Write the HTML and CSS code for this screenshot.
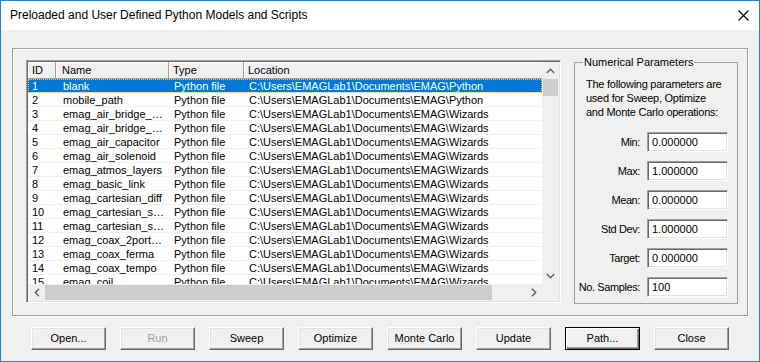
FILE: index.html
```html
<!DOCTYPE html>
<html>
<head>
<meta charset="utf-8">
<link rel="stylesheet" href="styles.css">
</head>
<body>
<div class="window">
  <div class="titlebar">
    <span class="title">Preloaded and User Defined Python Models and Scripts</span>
    <svg class="close-x" width="11" height="11" viewBox="0 0 11 11"><path d="M0.5 0.5 L10.5 10.5 M10.5 0.5 L0.5 10.5" stroke="#000" stroke-width="1.1" fill="none"/></svg>
  </div>
  <div class="client">
    <div class="group">
      <div class="list">
        <div class="list-body">
          <div class="lv-header">
            <div class="hcell">ID</div>
            <div class="hcell">Name</div>
            <div class="hcell">Type</div>
            <div class="hcell last">Location</div>
          </div>
          <div class="rows">
            <div class="row selected"><span>1</span><span>blank</span><span>Python file</span><span>C:\Users\EMAGLab1\Documents\EMAG\Python</span></div>
            <div class="row"><span>2</span><span>mobile_path</span><span>Python file</span><span>C:\Users\EMAGLab1\Documents\EMAG\Python</span></div>
            <div class="row"><span>3</span><span>emag_air_bridge_…</span><span>Python file</span><span>C:\Users\EMAGLab1\Documents\EMAG\Wizards</span></div>
            <div class="row"><span>4</span><span>emag_air_bridge_…</span><span>Python file</span><span>C:\Users\EMAGLab1\Documents\EMAG\Wizards</span></div>
            <div class="row"><span>5</span><span>emag_air_capacitor</span><span>Python file</span><span>C:\Users\EMAGLab1\Documents\EMAG\Wizards</span></div>
            <div class="row"><span>6</span><span>emag_air_solenoid</span><span>Python file</span><span>C:\Users\EMAGLab1\Documents\EMAG\Wizards</span></div>
            <div class="row"><span>7</span><span>emag_atmos_layers</span><span>Python file</span><span>C:\Users\EMAGLab1\Documents\EMAG\Wizards</span></div>
            <div class="row"><span>8</span><span>emag_basic_link</span><span>Python file</span><span>C:\Users\EMAGLab1\Documents\EMAG\Wizards</span></div>
            <div class="row"><span>9</span><span>emag_cartesian_diff</span><span>Python file</span><span>C:\Users\EMAGLab1\Documents\EMAG\Wizards</span></div>
            <div class="row"><span>10</span><span>emag_cartesian_s…</span><span>Python file</span><span>C:\Users\EMAGLab1\Documents\EMAG\Wizards</span></div>
            <div class="row"><span>11</span><span>emag_cartesian_s…</span><span>Python file</span><span>C:\Users\EMAGLab1\Documents\EMAG\Wizards</span></div>
            <div class="row"><span>12</span><span>emag_coax_2port…</span><span>Python file</span><span>C:\Users\EMAGLab1\Documents\EMAG\Wizards</span></div>
            <div class="row"><span>13</span><span>emag_coax_ferma</span><span>Python file</span><span>C:\Users\EMAGLab1\Documents\EMAG\Wizards</span></div>
            <div class="row"><span>14</span><span>emag_coax_tempo</span><span>Python file</span><span>C:\Users\EMAGLab1\Documents\EMAG\Wizards</span></div>
            <div class="row"><span>15</span><span>emag_coil</span><span>Python file</span><span>C:\Users\EMAGLab1\Documents\EMAG\Wizards</span></div>
          </div>
        </div>
        <div class="vscroll">
          <div class="sbtn"><svg width="9" height="6" viewBox="0 0 9 6"><path d="M0.8 5 L4.5 1.3 L8.2 5" stroke="#606060" stroke-width="1.4" fill="none"/></svg></div>
          <div class="vthumb"></div>
          <div class="vtrack"></div>
          <div class="sbtn"><svg width="9" height="6" viewBox="0 0 9 6"><path d="M0.8 1 L4.5 4.7 L8.2 1" stroke="#606060" stroke-width="1.4" fill="none"/></svg></div>
        </div>
        <div class="hscroll">
          <div class="sbtn"><svg width="6" height="9" viewBox="0 0 6 9"><path d="M5 0.8 L1.3 4.5 L5 8.2" stroke="#606060" stroke-width="1.4" fill="none"/></svg></div>
          <div class="hthumb"></div>
          <div class="htrack"></div>
          <div class="sbtn"><svg width="6" height="9" viewBox="0 0 6 9"><path d="M1 0.8 L4.7 4.5 L1 8.2" stroke="#606060" stroke-width="1.4" fill="none"/></svg></div>
        </div>
        <div class="corner"></div>
      </div>
      <fieldset class="params">
        <legend>Numerical Parameters</legend>
        <p class="desc">The following parameters are<br>used for Sweep, Optimize<br>and Monte Carlo operations:</p>
        <div class="fields">
          <label>Min:</label><div class="input">0.000000</div>
          <label>Max:</label><div class="input">1.000000</div>
          <label>Mean:</label><div class="input">0.000000</div>
          <label>Std Dev:</label><div class="input">1.000000</div>
          <label>Target:</label><div class="input">0.000000</div>
          <label>No. Samples:</label><div class="input">100</div>
        </div>
      </fieldset>
    </div>
    <div class="buttons">
      <div class="btn">Open...</div>
      <div class="btn disabled">Run</div>
      <div class="btn">Sweep</div>
      <div class="btn">Optimize</div>
      <div class="btn">Monte Carlo</div>
      <div class="btn">Update</div>
      <div class="btn default">Path...</div>
      <div class="btn">Close</div>
    </div>
  </div>
</div>
</body>
</html>
```
FILE: styles.css
```css
html, body {
  margin: 0;
  padding: 0;
  background: #f0f0f0;
}
.window {
  width: 760px;
  height: 362px;
  box-sizing: border-box;
  border: 1px solid #1883d7;
  display: flex;
  flex-direction: column;
  font-family: "Liberation Sans", Arial, sans-serif;
  font-size: 11px;
  color: #000;
}
.titlebar {
  height: 29px;
  flex: none;
  background: #fff;
  display: flex;
  align-items: center;
  justify-content: space-between;
  padding: 0 10px 1px 9px;
  box-sizing: border-box;
}
.title {
  font-family: "Liberation Sans", Arial, sans-serif;
  font-size: 12px;
  color: #000;
}
.close-x {
  display: block;
  margin-top: 1px;
}
.client {
  flex: 1;
  background: #f0f0f0;
  display: flex;
  flex-direction: column;
}
.group {
  margin: 18px 0 0 11px;
  width: 736px;
  height: 268px;
  box-sizing: border-box;
  border: 1px solid #a0a0a0;
  box-shadow: inset 1px 1px 0 #fff, 1px 1px 0 #fff;
  padding: 7px 0 0 13px;
  display: flex;
  align-items: flex-start;
  gap: 13px;
}
.list {
  margin-top: 4px;
  width: 535px;
  height: 243px;
  box-sizing: border-box;
  border-top: 1px solid #a0a0a0;
  border-left: 1px solid #a0a0a0;
  border-right: 1px solid #fff;
  border-bottom: 1px solid #fff;
  box-shadow: inset 1px 1px 0 #696969, inset -1px -1px 0 #e3e3e3;
  padding: 1px;
  display: grid;
  grid-template-columns: 1fr 17px;
  grid-template-rows: 1fr 17px;
  background: #fff;
}
.list-body {
  overflow: hidden;
  background: #fff;
  min-width: 0;
}
.lv-header {
  display: grid;
  grid-template-columns: 28px 113px 75px 1fr;
  height: 17px;
  background: #f0f0f0;
  border-bottom: 1px solid #a0a0a0;
  box-sizing: border-box;
}
.hcell {
  border-right: 1px solid #a0a0a0;
  box-shadow: inset 1px 1px 0 #fff;
  padding-left: 4px;
  line-height: 16px;
  white-space: nowrap;
}
.hcell:nth-child(2) { padding-left: 6px; }
.hcell.last { border-right: none; }
.row {
  display: grid;
  grid-template-columns: 28px 113px 75px 1fr;
  height: 14px;
  line-height: 13px;
  border-bottom: 1px solid #f0f0f0;
  box-sizing: border-box;
  white-space: nowrap;
}
.row span { padding: 1px 0 0 5px; overflow: hidden; }
.row span:first-child { padding-left: 4px; }
.row span:nth-child(2) { padding-left: 7px; }
.row.selected {
  background: #0078d7;
  color: #fff;
  outline: 1px dotted #f5c070;
  outline-offset: -1px;
}
.vscroll {
  background: #f0f0f0;
  display: flex;
  flex-direction: column;
}
.sbtn {
  flex: none;
  width: 17px;
  height: 17px;
  display: flex;
  align-items: center;
  justify-content: center;
  background: #f0f0f0;
}
.vthumb {
  height: 17px;
  margin: 0 1px;
  background: #cdcdcd;
}
.vtrack { flex: 1; }
.hscroll {
  background: #f0f0f0;
  display: flex;
}
.hthumb {
  width: 447px;
  margin: 1px 0;
  background: #cdcdcd;
}
.htrack { flex: 1; }
.corner { background: #f0f0f0; }
.params {
  margin: 0;
  padding: 0 9px 0 11px;
  width: 164px;
  height: 248px;
  box-sizing: border-box;
  border: 1px solid #a0a0a0;
  min-width: 0;
}
.params legend {
  padding: 0 1px;
  margin-left: -3px;
  line-height: 13px;
}
.desc {
  margin: 8px 0 0 0;
  line-height: 14px;
  white-space: nowrap;
  letter-spacing: -0.25px;
}
.fields {
  margin-top: 13px;
  display: grid;
  grid-template-columns: auto 81px;
  justify-content: end;
  column-gap: 7px;
  row-gap: 9px;
  align-items: center;
}
.fields label {
  text-align: right;
  white-space: nowrap;
  letter-spacing: -0.4px;
}
.input {
  height: 20px;
  box-sizing: border-box;
  background: #fff;
  border-top: 1px solid #a0a0a0;
  border-left: 1px solid #a0a0a0;
  border-right: 1px solid #fff;
  border-bottom: 1px solid #fff;
  box-shadow: inset 1px 1px 0 #696969, inset -1px -1px 0 #e3e3e3;
  padding-left: 4px;
  line-height: 18px;
}
.buttons {
  display: flex;
  gap: 14px;
  margin: 11px 0 0 30px;
}
.btn {
  width: 75px;
  height: 23px;
  box-sizing: border-box;
  background: #f0f0f0;
  border-top: 1px solid #fff;
  border-left: 1px solid #fff;
  border-right: 1px solid #696969;
  border-bottom: 1px solid #696969;
  box-shadow: inset -1px -1px 0 #a0a0a0, inset 1px 1px 0 #e3e3e3;
  text-align: center;
  line-height: 21px;
}
.btn.disabled { color: #a0a0a0; }
.btn.default {
  border: 1px solid #000;
  box-shadow: inset 1px 1px 0 #fff, inset -1px -1px 0 #696969, inset -2px -2px 0 #a0a0a0;
}
```
